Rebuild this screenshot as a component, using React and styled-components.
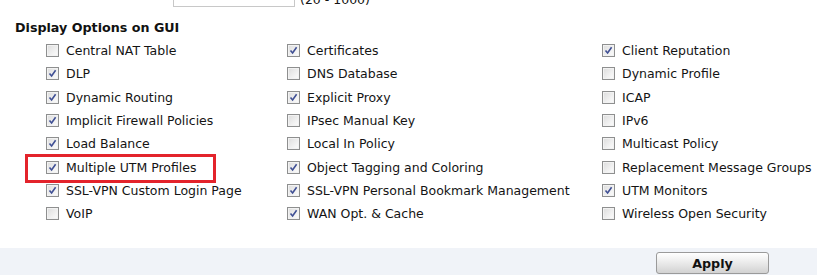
import React from "react";
import styled, { createGlobalStyle } from "styled-components";

const GlobalStyle = createGlobalStyle`
  html, body { margin: 0; padding: 0; background: #fff; }
  body { font-family: "DejaVu Sans", Verdana, sans-serif; color: #141414; }
`;

const Page = styled.div`
  width: 817px;
  height: 275px;
  overflow: hidden;
  display: flex;
  flex-direction: column;
`;

const TopRow = styled.div`
  height: 7px;
  overflow: hidden;
  display: flex;
  align-items: flex-end;
  padding-left: 173px;
  gap: 5px;
`;

const SizeInput = styled.div`
  width: 122px;
  height: 20px;
  border: 1px solid #c8c8c8;
  box-sizing: border-box;
`;

const Hint = styled.span`
  font-size: 12.5px;
  line-height: 12px;
  margin-bottom: 1px;
`;

const Title = styled.h3`
  margin: 13px 0 0 15px;
  font-size: 12.7px;
  font-weight: bold;
  line-height: 15px;
  color: #111;
`;

const Grid = styled.div`
  display: grid;
  grid-template-columns: 241px 315px 1fr;
  grid-auto-flow: column;
  grid-template-rows: repeat(8, 23.3px);
  padding-left: 46px;
  margin-top: 4px;
`;

const Item = styled.label`
  position: relative;
  display: flex;
  align-items: center;
  gap: 7px;
  font-size: 12.5px;
  white-space: nowrap;
  color: #141414;

  ${(p) =>
    p.$marked &&
    `
    &::after {
      content: "";
      position: absolute;
      left: -21px;
      top: -1px;
      width: 191px;
      height: 29px;
      border: 3.5px solid #e3232b;
      box-sizing: border-box;
    }
  `}
`;

const Box = styled.span`
  width: 13px;
  height: 13px;
  flex: none;
  box-sizing: border-box;
  border: 1px solid #8e8f8f;
  background: linear-gradient(135deg, #dcdcdc 0%, #f4f4f4 70%, #fbfbfb 100%);
  box-shadow: inset 0 0 0 1px #f2f2f2;
  display: flex;
  align-items: center;
  justify-content: center;
`;

const Footer = styled.div`
  margin-top: auto;
  height: 27px;
  background: #f0f3f8;
  display: flex;
  justify-content: flex-end;
  align-items: flex-start;
  padding: 4px 48px 0 0;
  box-sizing: border-box;
`;

const Button = styled.button`
  width: 113px;
  height: 22px;
  border: 1px solid #9a9a9a;
  border-radius: 3px;
  background: linear-gradient(#ffffff 0%, #ececec 45%, #d2d2d2 100%);
  font-family: "DejaVu Sans", Verdana, sans-serif;
  font-size: 12.7px;
  font-weight: bold;
  color: #111;
  padding: 0;
`;

const columns = [
  [
    ["Central NAT Table", false],
    ["DLP", true],
    ["Dynamic Routing", true],
    ["Implicit Firewall Policies", true],
    ["Load Balance", true],
    ["Multiple UTM Profiles", true, true],
    ["SSL-VPN Custom Login Page", true],
    ["VoIP", false],
  ],
  [
    ["Certificates", true],
    ["DNS Database", false],
    ["Explicit Proxy", true],
    ["IPsec Manual Key", false],
    ["Local In Policy", false],
    ["Object Tagging and Coloring", true],
    ["SSL-VPN Personal Bookmark Management", true],
    ["WAN Opt. & Cache", true],
  ],
  [
    ["Client Reputation", true],
    ["Dynamic Profile", false],
    ["ICAP", false],
    ["IPv6", false],
    ["Multicast Policy", false],
    ["Replacement Message Groups", false],
    ["UTM Monitors", true],
    ["Wireless Open Security", false],
  ],
];

const Check = () => (
  <svg width="9" height="9" viewBox="0 0 9 9">
    <path d="M1.5 4.5 L3.6 7 L7.6 1.2" fill="none" stroke="#3f4f94" strokeWidth="1.6" />
  </svg>
);

const Option = ({ label, checked, marked }) => (
  <Item $marked={marked}>
    <Box>{checked && <Check />}</Box>
    {label}
  </Item>
);

export default function App() {
  return (
    <Page>
      <GlobalStyle />
      <TopRow>
        <SizeInput />
        <Hint>(20 - 1000)</Hint>
      </TopRow>
      <Title>Display Options on GUI</Title>
      <Grid>
        {columns.flat().map(([label, checked, marked]) => (
          <Option key={label} label={label} checked={checked} marked={marked} />
        ))}
      </Grid>
      <Footer>
        <Button>Apply</Button>
      </Footer>
    </Page>
  );
}
